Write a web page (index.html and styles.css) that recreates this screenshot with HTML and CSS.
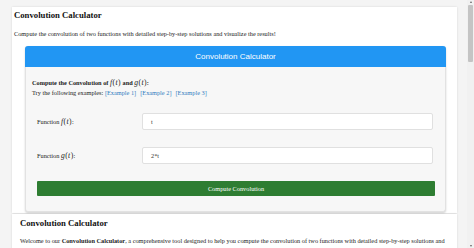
FILE: index.html
```html
<!DOCTYPE html>
<html>
<head>
<meta charset="utf-8">
<title>Convolution Calculator</title>
<link rel="stylesheet" href="styles.css">
</head>
<body>
<div class="layout">
  <main class="main">
    <section class="box top-box">
      <h1 class="title">Convolution Calculator</h1>
      <p class="intro">Compute the convolution of two functions with detailed step-by-step solutions and visualize the results!</p>
      <div class="card">
        <div class="card-head">Convolution Calculator</div>
        <div class="card-body">
          <div class="prompt"><b>Compute the Convolution of <span class="m"><i>f</i>(<i>t</i>)</span> and <span class="m"><i>g</i>(<i>t</i>)</span>:</b></div>
          <div class="examples">Try the following examples: <a href="#" class="ex">[Example 1]</a><a href="#" class="ex">[Example 2]</a><a href="#" class="ex">[Example 3]</a></div>
          <div class="row first">
            <label class="lbl">Function <span class="m"><i>f</i>(<i>t</i>)</span>:</label>
            <div class="inp">t</div>
          </div>
          <div class="row">
            <label class="lbl">Function <span class="m"><i>g</i>(<i>t</i>)</span>:</label>
            <div class="inp">2*t</div>
          </div>
          <div class="btn">Compute Convolution</div>
        </div>
      </div>
    </section>
    <section class="box bottom-box">
      <h2 class="title">Convolution Calculator</h2>
      <p class="intro">Welcome to our <b>Convolution Calculator</b>, a comprehensive tool designed to help you compute the convolution of two functions with detailed step-by-step solutions and</p>
    </section>
  </main>
  <aside class="scrollbar">
    <div class="arrow up"></div>
    <div class="thumb"></div>
    <div class="track"></div>
    <div class="arrow down"></div>
  </aside>
</div>
</body>
</html>
```
FILE: styles.css
```css
html, body {
  margin: 0;
  padding: 0;
  height: 248px;
  overflow: hidden;
}
body {
  background: #f4f4f4;
  font-family: "Liberation Serif", "Times New Roman", serif;
  font-size: 6.3px;
  color: #222;
}
.layout {
  display: flex;
  height: 248px;
}
.main {
  flex: 1;
  padding: 7px 0 0 12px;
}
.box {
  width: 445px;
  background: #fff;
  box-shadow: 0 0 2px rgba(0,0,0,0.12);
  box-sizing: border-box;
}
.top-box {
  padding: 3px 0 1px 2px;
}
.title {
  font-size: 8.7px;
  line-height: 10px;
  font-weight: bold;
  margin: 0;
  color: #111;
}
.intro {
  margin: 10px 0 0 0;
  line-height: 8px;
  white-space: nowrap;
}
.card {
  margin: 8px 0 0 11px;
  width: 421px;
  background: #f7f7f7;
  border: 1px solid #e2e2e2;
  border-top: none;
  border-radius: 3px;
  box-shadow: 0 1px 2px rgba(0,0,0,0.18);
  box-sizing: border-box;
}
.card-head {
  height: 21px;
  background: #2196f3;
  color: #fff;
  font-family: "Liberation Sans", Arial, sans-serif;
  font-size: 8px;
  display: flex;
  align-items: center;
  justify-content: center;
  border-radius: 3px 3px 0 0;
  margin: 0 -1px;
}
.card-body {
  padding: 11px 11px 15px 6px;
}
.prompt, .examples {
  line-height: 9.5px;
  white-space: nowrap;
}
.m {
  font-family: "Liberation Serif", serif;
  font-size: 7.6px;
  font-weight: normal;
  letter-spacing: 0.4px;
}
.ex {
  color: #2f7bc0;
  text-decoration: none;
  margin-right: 4px;
}
.row {
  display: flex;
  align-items: center;
  margin: 17px 0 0 5px;
}
.row.first {
  margin-top: 16px;
}
.lbl {
  width: 105px;
}
.inp {
  width: 291px;
  height: 17px;
  box-sizing: border-box;
  background: #fff;
  border: 1px solid #e0e0e0;
  border-radius: 2px;
  padding-left: 8px;
  display: flex;
  align-items: center;
  font-size: 6.3px;
  color: #333;
}
.btn {
  margin: 17px 0 0 5px;
  width: 398px;
  height: 15px;
  background: #2e7d32;
  color: #fff;
  display: flex;
  align-items: center;
  justify-content: center;
  border-radius: 1px;
}
.bottom-box {
  margin-top: 1px;
  padding: 4px 0 0 8px;
  height: 40px;
}
.bottom-box .intro {
  margin-top: 9px;
}
.scrollbar {
  width: 7px;
  margin-left: 0;
  background: #f1f1f1;
  display: flex;
  flex-direction: column;
  align-items: center;
}
.arrow {
  width: 0;
  height: 0;
  border-left: 1.5px solid transparent;
  border-right: 1.5px solid transparent;
  margin: 1px 0;
}
.arrow.up {
  border-bottom: 2px solid #666;
}
.arrow.down {
  border-top: 2px solid #666;
}
.thumb {
  width: 5px;
  height: 57px;
  margin-top: 1px;
  background: #c4c4c4;
  border-radius: 1px;
}
.track {
  flex: 1;
}
```
